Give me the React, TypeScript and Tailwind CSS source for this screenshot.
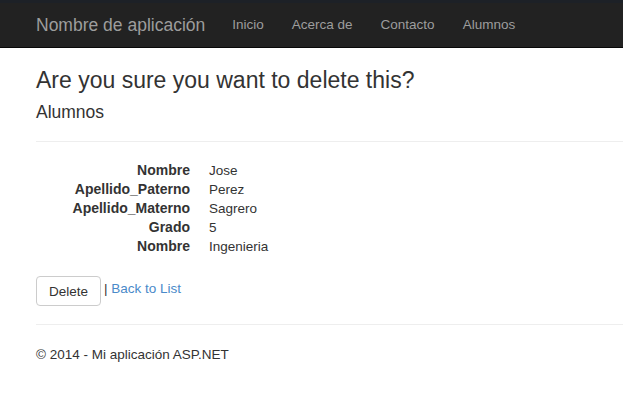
const fields: [string, string][] = [
  ["Nombre", "Jose"],
  ["Apellido_Paterno", "Perez"],
  ["Apellido_Materno", "Sagrero"],
  ["Grado", "5"],
  ["Nombre", "Ingenieria"],
];

const navLinks = ["Inicio", "Acerca de", "Contacto", "Alumnos"];

export default function App() {
  return (
    <div className="min-h-[396px] bg-white font-['Liberation_Sans',Arial,sans-serif] text-[13.5px] text-[#333]">
      <nav className="flex h-[48px] items-center border-t-[3px] border-b border-t-[#1d2127] border-b-[#080808] bg-[#222] pl-[36px] pt-[1px]">
        <a className="mr-[27px] text-[17.5px] text-[#9d9d9d]">Nombre de aplicación</a>
        <ul className="flex gap-[28px]">
          {navLinks.map((l) => (
            <li key={l}>
              <a className="text-[#9d9d9d]">{l}</a>
            </li>
          ))}
        </ul>
      </nav>

      <main className="pl-[36px]">
        <h2 className="mt-[19px] text-[23px] leading-[26px]">Are you sure you want to delete this?</h2>
        <div>
          <h4 className="mt-[9px] text-[17.5px] leading-[20px]">Alumnos</h4>
          <hr className="mt-[19px] border-t border-[#eee]" />
          <dl className="mt-[19px] flex flex-col leading-[19px]">
            {fields.map(([k, v], i) => (
              <div key={i} className="flex">
                <dt className="w-[154px] text-right text-[14px] font-bold">{k}</dt>
                <dd className="ml-[19px]">{v}</dd>
              </div>
            ))}
          </dl>

          <div className="mt-[20px] flex items-center">
            <button className="h-[30px] rounded-[4px] border border-[#ccc] bg-white px-[12px] pt-[2px] text-[#333]">
              Delete
            </button>
            <span className="ml-[3px] -mt-[3px]">
              | <a className="text-[#4a8ac9]">Back to List</a>
            </span>
          </div>
        </div>

        <hr className="mt-[18px] border-t border-[#eee]" />
        <footer className="mt-[20px]">
          <p>© 2014 - Mi aplicación ASP.NET</p>
        </footer>
      </main>
    </div>
  );
}
